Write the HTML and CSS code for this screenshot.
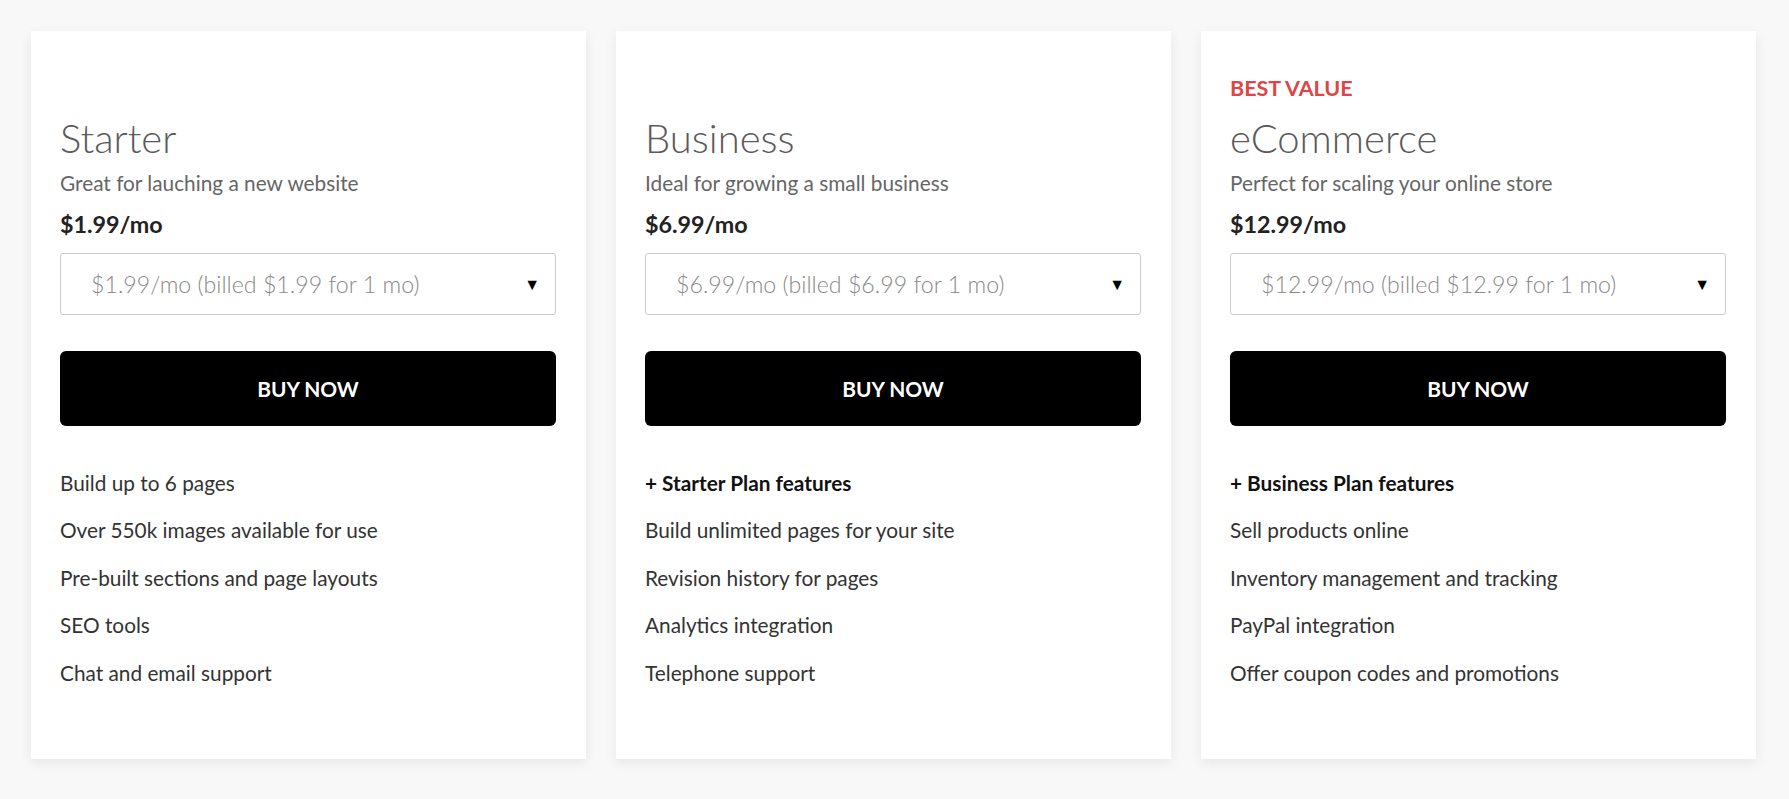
FILE: index.html
```html
<!DOCTYPE html>
<html lang="en">
<head>
<meta charset="utf-8">
<title>Pricing</title>
<link rel="stylesheet" href="styles.css">
</head>
<body>
<main class="pricing">
  <section class="card">
    <div class="label label-empty">&nbsp;</div>
    <h2 class="title">Starter</h2>
    <p class="subtitle">Great for lauching a new website</p>
    <p class="price">$1.99/mo</p>
    <div class="select"><span class="select-text">$1.99/mo (billed $1.99 for 1 mo)</span><span class="arrow">▼</span></div>
    <button class="buy">BUY NOW</button>
    <ul class="features">
      <li>Build up to 6 pages</li>
      <li>Over 550k images available for use</li>
      <li>Pre-built sections and page layouts</li>
      <li>SEO tools</li>
      <li>Chat and email support</li>
    </ul>
  </section>
  <section class="card">
    <div class="label label-empty">&nbsp;</div>
    <h2 class="title">Business</h2>
    <p class="subtitle">Ideal for growing a small business</p>
    <p class="price">$6.99/mo</p>
    <div class="select"><span class="select-text">$6.99/mo (billed $6.99 for 1 mo)</span><span class="arrow">▼</span></div>
    <button class="buy">BUY NOW</button>
    <ul class="features">
      <li class="plus">+ Starter Plan features</li>
      <li>Build unlimited pages for your site</li>
      <li>Revision history for pages</li>
      <li>Analytics integration</li>
      <li>Telephone support</li>
    </ul>
  </section>
  <section class="card">
    <div class="label">BEST VALUE</div>
    <h2 class="title">eCommerce</h2>
    <p class="subtitle">Perfect for scaling your online store</p>
    <p class="price">$12.99/mo</p>
    <div class="select"><span class="select-text">$12.99/mo (billed $12.99 for 1 mo)</span><span class="arrow">▼</span></div>
    <button class="buy">BUY NOW</button>
    <ul class="features">
      <li class="plus">+ Business Plan features</li>
      <li>Sell products online</li>
      <li>Inventory management and tracking</li>
      <li>PayPal integration</li>
      <li>Offer coupon codes and promotions</li>
    </ul>
  </section>
</main>
</body>
</html>
```
FILE: styles.css
```css
* { box-sizing: border-box; }
html, body { margin: 0; padding: 0; }
body {
  background: #f8f8f8;
  font-family: Lato, "Open Sans", sans-serif;
  color: #333;
}
.pricing {
  display: flex;
  gap: 30px;
  padding: 31px 33px 40px 31px;
}
.card {
  flex: 1;
  background: #fff;
  box-shadow: 0 4px 12px rgba(0,0,0,0.07);
  padding: 46px 30px 63px 29px;
}
.label {
  font-size: 21.5px;
  line-height: 22px;
  font-weight: 700;
  color: #e04545;
}
.title {
  margin: 15px 0 0;
  font-size: 40px;
  line-height: 48px;
  font-weight: 300;
  color: #5a5a5a;
}
.subtitle {
  margin: 9px 0 0;
  font-size: 20.8px;
  line-height: 24px;
  color: #666;
}
.price {
  margin: 15px 0 0;
  font-size: 23.3px;
  line-height: 28px;
  font-weight: 700;
  color: #222;
}
.select {
  margin-top: 15px;
  height: 62px;
  border: 1px solid #ccc;
  border-radius: 3px;
  display: flex;
  align-items: center;
  justify-content: space-between;
  padding: 0 15px 0 30px;
}
.select-text {
  font-size: 23.2px;
  font-weight: 300;
  color: #888;
}
.arrow {
  font-size: 16px;
  color: #000;
}
.buy {
  display: block;
  width: 100%;
  margin-top: 36px;
  height: 75px;
  border: 0;
  border-radius: 6px;
  background: #000;
  color: #fff;
  font-family: Lato, sans-serif;
  font-size: 20.9px;
  font-weight: 700;
}
.features {
  list-style: none;
  margin: 33px 0 0;
  padding: 0;
}
.features li {
  font-size: 20.8px;
  line-height: 47.4px;
  color: #333;
}
.features li.plus {
  font-weight: 700;
  color: #111;
}
```
